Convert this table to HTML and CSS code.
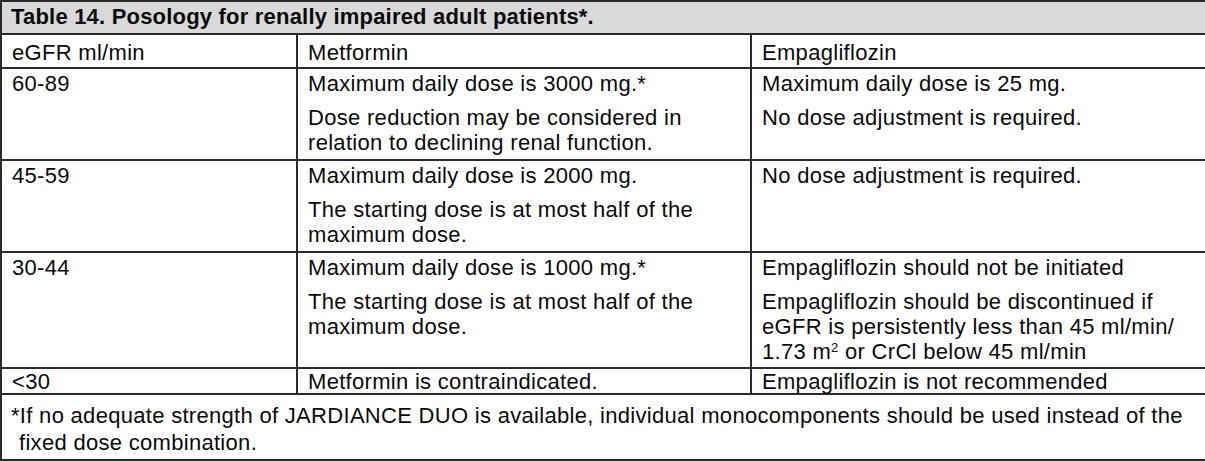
FILE: index.html
```html
<!DOCTYPE html>
<html lang="en">
<head>
<meta charset="utf-8">
<title>Table 14</title>
<link rel="stylesheet" href="styles.css">
</head>
<body>
<table class="pos">
  <colgroup>
    <col class="c1">
    <col class="c2">
    <col class="c3">
  </colgroup>
  <thead>
    <tr class="title-row"><th colspan="3">Table 14. Posology for renally impaired adult patients*.</th></tr>
    <tr class="head-row"><td>eGFR ml/min</td><td>Metformin</td><td>Empagliflozin</td></tr>
  </thead>
  <tbody>
    <tr>
      <td><p>60-89</p></td>
      <td><p>Maximum daily dose is 3000 mg.*</p><p>Dose reduction may be considered in relation to declining renal function.</p></td>
      <td><p>Maximum daily dose is 25 mg.</p><p>No dose adjustment is required.</p></td>
    </tr>
    <tr>
      <td><p>45-59</p></td>
      <td><p>Maximum daily dose is 2000 mg.</p><p>The starting dose is at most half of the maximum dose.</p></td>
      <td><p>No dose adjustment is required.</p></td>
    </tr>
    <tr class="long-row">
      <td><p>30-44</p></td>
      <td><p>Maximum daily dose is 1000 mg.*</p><p>The starting dose is at most half of the maximum dose.</p></td>
      <td><p>Empagliflozin should not be initiated</p><p>Empagliflozin should be discontinued if eGFR is persistently less than 45 ml/min/ 1.73 m<sup>2</sup> or CrCl below 45 ml/min</p></td>
    </tr>
    <tr class="short-row">
      <td><p>&lt;30</p></td>
      <td><p>Metformin is contraindicated.</p></td>
      <td><p>Empagliflozin is not recommended</p></td>
    </tr>
  </tbody>
  <tfoot>
    <tr class="foot-row"><td colspan="3"><p>*If no adequate strength of JARDIANCE DUO is available, individual monocomponents should be used instead of the fixed dose combination.</p></td></tr>
  </tfoot>
</table>
</body>
</html>
```
FILE: styles.css
```css
html, body {
  margin: 0;
  padding: 0;
  background: #ffffff;
}

.pos {
  width: 1205px;
  border-collapse: collapse;
  table-layout: fixed;
  font-family: "Liberation Sans", Arial, Helvetica, sans-serif;
  font-size: 22px;
  letter-spacing: 0.3px;
  line-height: 25px;
  color: #0a0a0a;
}

.c1 { width: 296px; }
.c2 { width: 454px; }
.c3 { width: 455px; }

.pos th,
.pos td {
  border: 2px solid #2a2a2a;
  padding: 2px 10px 4px 10px;
  vertical-align: top;
  text-align: left;
}

.pos p {
  margin: 0;
}

.pos p + p {
  margin-top: 9px;
}

.pos sup {
  font-size: 13px;
  line-height: 0;
  vertical-align: 7px;
}

.title-row th {
  background: #d9d9d9;
  font-weight: bold;
  letter-spacing: 0.2px;
  padding: 2px 9px 4px 9px;
}

.head-row td {
  padding: 5px 10px 2px 10px;
}

.long-row td {
  padding-bottom: 3px;
}

.short-row td {
  padding: 1px 10px 0 10px;
  line-height: 23px;
}

.foot-row td {
  padding: 7px 10px 3px 17px;
}

.foot-row p {
  text-indent: -8px;
  line-height: 27px;
}
```
